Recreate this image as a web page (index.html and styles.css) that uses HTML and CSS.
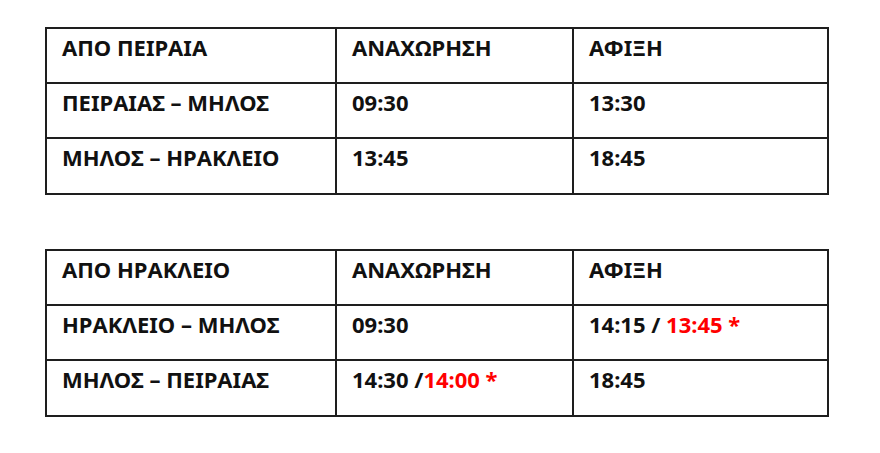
FILE: index.html
```html
<!DOCTYPE html>
<html lang="el">
<head>
<meta charset="utf-8">
<title>Δρομολόγια</title>
<link rel="stylesheet" href="styles.css">
</head>
<body>
<main class="page">
  <section class="schedule">
    <div class="cell">ΑΠΟ ΠΕΙΡΑΙΑ</div>
    <div class="cell">ΑΝΑΧΩΡΗΣΗ</div>
    <div class="cell">ΑΦΙΞΗ</div>
    <div class="cell">ΠΕΙΡΑΙΑΣ – ΜΗΛΟΣ</div>
    <div class="cell">09:30</div>
    <div class="cell">13:30</div>
    <div class="cell">ΜΗΛΟΣ – ΗΡΑΚΛΕΙΟ</div>
    <div class="cell">13:45</div>
    <div class="cell">18:45</div>
  </section>
  <section class="schedule">
    <div class="cell">ΑΠΟ ΗΡΑΚΛΕΙΟ</div>
    <div class="cell">ΑΝΑΧΩΡΗΣΗ</div>
    <div class="cell">ΑΦΙΞΗ</div>
    <div class="cell">ΗΡΑΚΛΕΙΟ – ΜΗΛΟΣ</div>
    <div class="cell">09:30</div>
    <div class="cell">14:15 / <span class="alt">13:45 *</span></div>
    <div class="cell">ΜΗΛΟΣ – ΠΕΙΡΑΙΑΣ</div>
    <div class="cell">14:30 /<span class="alt">14:00 *</span></div>
    <div class="cell">18:45</div>
  </section>
</main>
</body>
</html>
```
FILE: styles.css
```css
html, body {
  margin: 0;
  padding: 0;
  background: #ffffff;
}

.page {
  padding: 27px 0 0 45px;
  display: flex;
  flex-direction: column;
  gap: 54px;
  font-family: "Noto Sans", "Open Sans", sans-serif;
  font-weight: 700;
  font-size: 22px;
  color: #111111;
}

.schedule {
  width: max-content;
  display: grid;
  grid-template-columns: 288px 235px 253px;
  grid-template-rows: 53px 53px 54px;
  gap: 2px;
  border: 2px solid #1e1e1e;
  background: #1e1e1e;
}

.cell {
  background: #ffffff;
  padding: 6px 0 0 15px;
  line-height: 24px;
  white-space: nowrap;
}

.alt {
  color: #ff0000;
}
```
